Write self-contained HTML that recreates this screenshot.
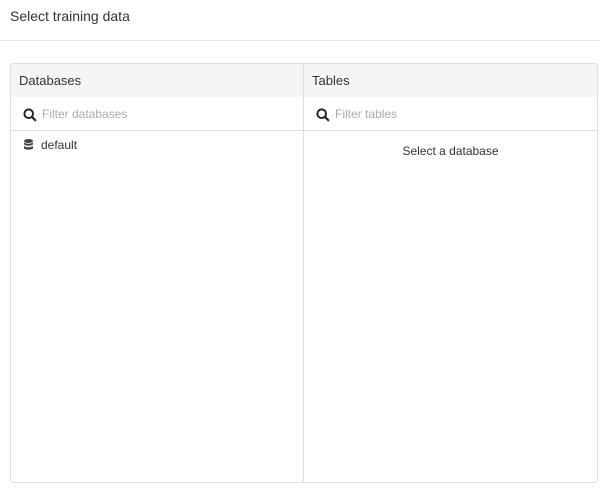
<!DOCTYPE html>
<html><head><style>
body{margin:0;width:600px;height:489px;background:#fff;font-family:"Liberation Sans",sans-serif;position:relative;overflow:hidden}
.title{position:absolute;left:10px;top:8px;font-size:14px;color:#333}
.hr{position:absolute;left:0;right:0;top:40px;height:1px;background:#e5e5e5}
.panel{position:absolute;left:10px;top:63px;width:586px;height:418px;border:1px solid #ddd;border-radius:3px;overflow:hidden}
.col{position:absolute;top:0;bottom:0}
.hd{height:33px;background:#f5f5f5;font-size:13px;color:#333;line-height:33px;padding-left:8px}
.flt{height:33px;border-bottom:1px solid #ddd;font-size:12px;color:#aaa;line-height:35px;position:relative;padding-left:31px}
.flt svg{position:absolute;left:12px;top:11px}
</style></head><body>
<div class="title">Select training data</div>
<div class="hr"></div>
<div class="panel">
 <div class="col" style="left:0;width:292px;border-right:1px solid #ddd">
  <div class="hd">Databases</div>
  <div class="flt"><svg width="14" height="14" viewBox="0 0 13 13"><circle cx="5.3" cy="5.3" r="4" fill="none" stroke="#222" stroke-width="1.8"/><line x1="8.3" y1="8.3" x2="12" y2="12" stroke="#222" stroke-width="2"/></svg>Filter databases</div>
  <div style="position:relative;height:26px;font-size:12px;color:#333;line-height:28px;padding-left:30px">
   <svg style="position:absolute;left:13px;top:8px" width="9" height="12" viewBox="0 0 9 12"><ellipse cx="4.5" cy="2" rx="4.5" ry="2" fill="#444"/><path d="M0 3.5Q4.5 6 9 3.5V5.5Q4.5 8 0 5.5Z" fill="#444"/><path d="M0 7Q4.5 9.5 9 7V9.5Q4.5 12 0 9.5Z" fill="#444"/></svg>default</div>
 </div>
 <div class="col" style="left:293px;right:0">
  <div class="hd">Tables</div>
  <div class="flt"><svg width="14" height="14" viewBox="0 0 13 13"><circle cx="5.3" cy="5.3" r="4" fill="none" stroke="#222" stroke-width="1.8"/><line x1="8.3" y1="8.3" x2="12" y2="12" stroke="#222" stroke-width="2"/></svg>Filter tables</div>
  <div style="text-align:center;font-size:12px;color:#333;margin-top:13px">Select a database</div>
 </div>
</div>
</body></html>
